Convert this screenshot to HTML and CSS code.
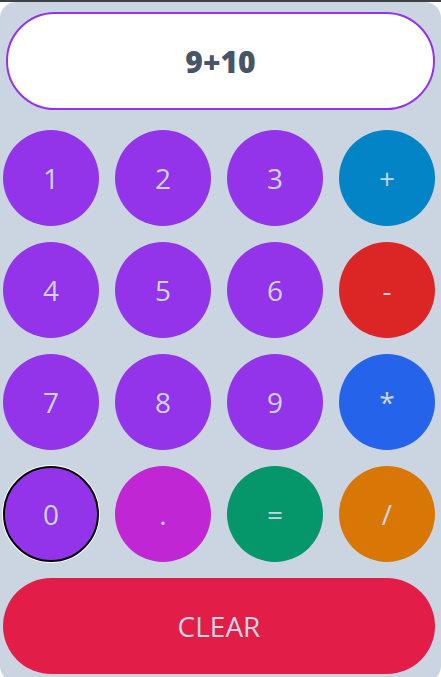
FILE: index.html
```html
<!DOCTYPE html>
<html lang="en">
<head>
    <meta charset="UTF-8">
    <meta name="viewport" content="width=device-width, initial-scale=1.0">
    <title>Calculator</title>
    <link rel="stylesheet" href="styles.css">
</head>
<body>
    <div class="calculator">
        <div class="display" id="display">9+10</div>
        <div class="keys">
            <button class="key key-num">1</button>
            <button class="key key-num">2</button>
            <button class="key key-num">3</button>
            <button class="key key-plus">+</button>
            <button class="key key-num">4</button>
            <button class="key key-num">5</button>
            <button class="key key-num">6</button>
            <button class="key key-minus">-</button>
            <button class="key key-num">7</button>
            <button class="key key-num">8</button>
            <button class="key key-num">9</button>
            <button class="key key-times">*</button>
            <button class="key key-num key-focus">0</button>
            <button class="key key-dot">.</button>
            <button class="key key-equals">=</button>
            <button class="key key-divide">/</button>
        </div>
        <button class="clear-button">CLEAR</button>
    </div>
</body>
</html>
```

FILE: styles.css
```css
body {
    margin: 0;
    border-top: 2px solid #3f3f46;
    background-color: #fff;
    font-family: "Open Sans", Arial, sans-serif;
}
.calculator {
    background-color: #cbd5e1;
    border-radius: 16px;
    padding: 10px 6px 8px 3px;
    min-height: 657px;
    box-sizing: border-box;
}
.display {
    margin: 0 0 20px 3px;
    height: 98px;
    box-sizing: border-box;
    border: 2px solid #9333ea;
    border-radius: 49px;
    background-color: #fff;
    color: #475569;
    font-size: 30px;
    font-weight: 800;
    display: flex;
    align-items: center;
    justify-content: center;
}
.keys {
    display: grid;
    grid-template-columns: repeat(4, 96px);
    justify-content: space-between;
    row-gap: 16px;
}
.key {
    width: 96px;
    height: 96px;
    border: none;
    border-radius: 50%;
    color: #cbd5e1;
    font-family: inherit;
    font-size: 28px;
    padding: 0;
    cursor: pointer;
}
.key-num {
    background-color: #9333ea;
}
.key-plus {
    background-color: #0284c7;
}
.key-minus {
    background-color: #dc2626;
}
.key-times {
    background-color: #2563eb;
}
.key-dot {
    background-color: #c026d3;
}
.key-equals {
    background-color: #059669;
}
.key-divide {
    background-color: #d97706;
}
.key-focus {
    border: 2px solid #000;
    box-shadow: 0 0 0 1px #fff;
}
.clear-button {
    display: block;
    width: 100%;
    height: 96px;
    margin-top: 16px;
    border: none;
    border-radius: 48px;
    background-color: #e11d48;
    color: #cbd5e1;
    font-family: inherit;
    font-size: 28px;
    cursor: pointer;
}
```
